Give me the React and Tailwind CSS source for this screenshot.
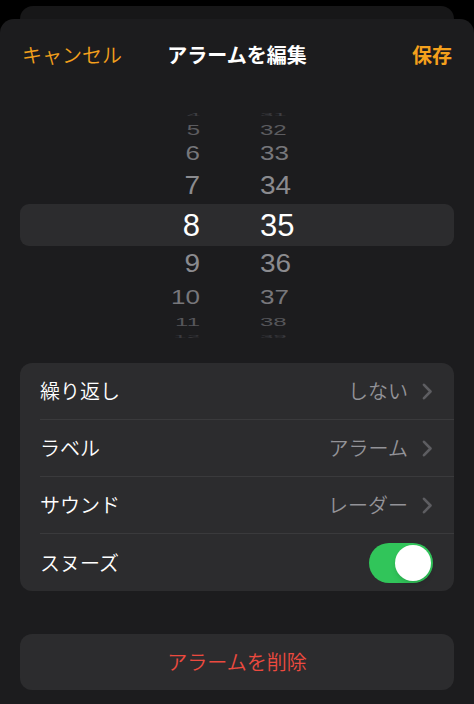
import React from "react";

const JP = { fontFamily: '"Noto Sans CJK JP", "Noto Sans", sans-serif' };
const NUM = { fontFamily: '"Liberation Sans", Arial, sans-serif' };

const rows = [
  { h: "4", m: "31", hgt: "h-[12px]", size: "text-[24px]", color: "text-[#3e3e42]", sy: 0.15 },
  { h: "5", m: "32", hgt: "h-[17px]", size: "text-[24px]", color: "text-[#5c5c60]", sy: 0.6 },
  { h: "6", m: "33", hgt: "h-[30px]", size: "text-[26px]", color: "text-[#77777b]", sy: 0.8 },
  { h: "7", m: "34", hgt: "h-[36px]", size: "text-[28px]", color: "text-[#8b8b8f]", sy: 0.9 },
  { h: "8", m: "35", hgt: "h-[42px]", size: "text-[31px]", color: "text-white", sy: 1, sel: true },
  { h: "9", m: "36", hgt: "h-[36px]", size: "text-[28px]", color: "text-[#8b8b8f]", sy: 0.9 },
  { h: "10", m: "37", hgt: "h-[30px]", size: "text-[26px]", color: "text-[#77777b]", sy: 0.8 },
  { h: "11", m: "38", hgt: "h-[20px]", size: "text-[24px]", color: "text-[#56565a]", sy: 0.45 },
  { h: "12", m: "39", hgt: "h-[10px]", size: "text-[24px]", color: "text-[#3a3a3e]", sy: 0.15 },
];

function Chevron() {
  return (
    <svg width="11" height="17" viewBox="0 0 11 17" className="ml-[14px]">
      <path d="M2 1.8 L8.5 8.5 L2 15.2" fill="none" stroke="#5d5d61" strokeWidth="2.6" strokeLinecap="round" strokeLinejoin="round" />
    </svg>
  );
}

function Row({ label, value, last, toggle }) {
  return (
    <div className="h-[57px] pl-5 flex">
      <div className={`flex-1 flex items-center pr-[21px] ${last ? "" : "border-b border-[#3a3a3c]"}`}>
        <span className="text-[20px] text-white flex-1 font-[350]" style={JP}>{label}</span>
        {toggle ? (
          <div className="w-[64px] h-[40px] rounded-full bg-[#31c55a] flex items-center justify-end pr-[2px]">
            <div className="w-[36px] h-[36px] rounded-full bg-white shadow-md" />
          </div>
        ) : (
          <>
            <span className="text-[20px] text-[#939398] font-[350]" style={JP}>{value}</span>
            <Chevron />
          </>
        )}
      </div>
    </div>
  );
}

export default function App() {
  return (
    <div className="w-[474px] h-[704px] bg-black overflow-hidden flex flex-col">
      <div className="mt-[6px] mx-[20px] h-[13px] rounded-t-[14px] bg-[#171718]" />
      <div className="flex-1 bg-[#1c1c1e] rounded-t-[14px] flex flex-col">
        <div className="h-[72px] flex items-center justify-between px-[22px] relative">
          <span className="text-[20px] text-[#f4a01c] font-[350]" style={JP}>キャンセル</span>
          <span className="text-[20px] text-white font-bold absolute left-0 right-0 text-center pointer-events-none" style={JP}>アラームを編集</span>
          <span className="text-[20px] text-[#f4a01c] font-bold" style={JP}>保存</span>
        </div>

        <div className="mt-[18px] flex flex-col">
          {rows.map((r, i) => (
            <div
              key={i}
              className={`${r.hgt} mx-[20px] flex items-center overflow-hidden ${r.sel ? "bg-[#2c2c2e] rounded-[9px]" : ""}`}
            >
              <div className={`w-[180px] text-right leading-none ${r.size} ${r.color}`} style={{ ...NUM, transform: `scaleY(${r.sy})` }}>
                {r.h}
              </div>
              <div className={`ml-[60px] leading-none ${r.size} ${r.color}`} style={{ ...NUM, transform: `scaleY(${r.sy})` }}>
                {r.m}
              </div>
            </div>
          ))}
        </div>

        <div className="mt-[21px] mx-[20px] rounded-[12px] bg-[#2c2c2e] overflow-hidden">
          <Row label="繰り返し" value="しない" />
          <Row label="ラベル" value="アラーム" />
          <Row label="サウンド" value="レーダー" />
          <Row label="スヌーズ" toggle last />
        </div>

        <div className="mt-[43px] mx-[20px] h-[56px] rounded-[12px] bg-[#2c2c2e] flex items-center justify-center">
          <span className="text-[20px] text-[#ec4a3f] font-[350]" style={JP}>アラームを削除</span>
        </div>
      </div>
    </div>
  );
}
